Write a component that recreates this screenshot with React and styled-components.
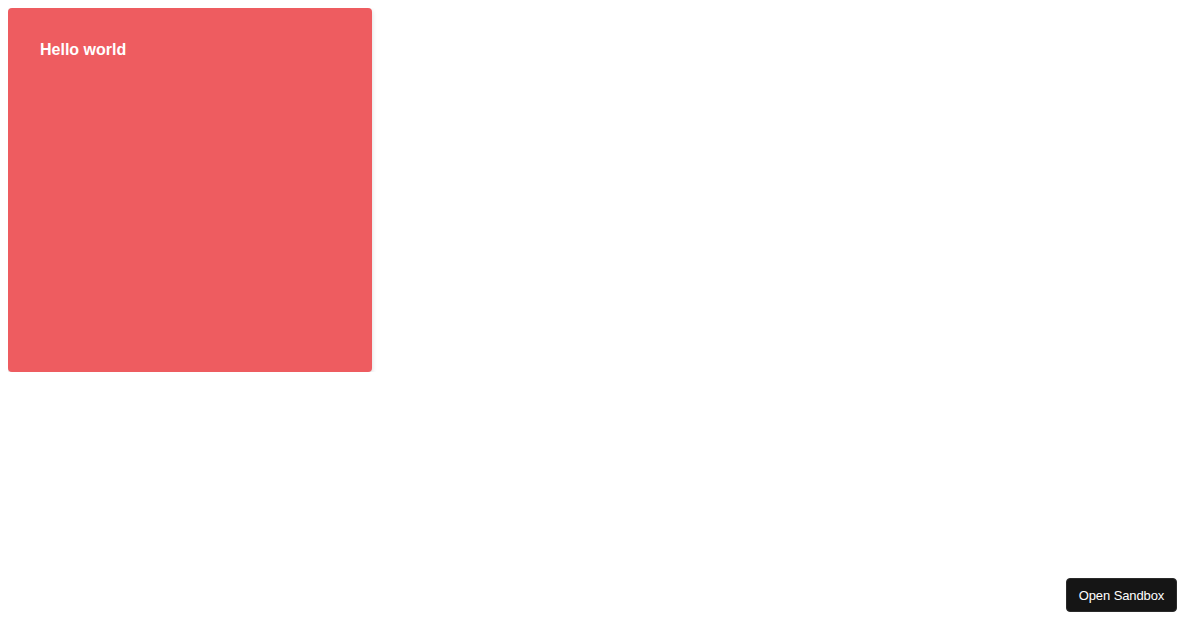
import React from "react";
import styled, { createGlobalStyle } from "styled-components";

const GlobalStyle = createGlobalStyle`
  body {
    margin: 8px;
    background: #ffffff;
    font-family: "Liberation Sans", Arial, sans-serif;
  }
`;

const Card = styled.div`
  width: 364px;
  height: 364px;
  box-sizing: border-box;
  padding: 32px;
  background: #ee5c60;
  border-radius: 4px;
  box-shadow: 0 2px 5px rgba(0, 0, 0, 0.16);
`;

const Title = styled.h1`
  margin: 0;
  color: #ffffff;
  font-size: 16px;
  line-height: 20px;
  font-weight: 700;
`;

const SandboxButton = styled.button`
  position: fixed;
  right: 23px;
  bottom: 18px;
  width: 111px;
  height: 34px;
  border: 1px solid #2a2a2a;
  border-radius: 4px;
  background: #151515;
  color: #ffffff;
  font-family: "Liberation Sans", Arial, sans-serif;
  font-size: 13px;
  letter-spacing: -0.1px;
  cursor: pointer;
`;

const App = () => {
  return (
    <>
      <GlobalStyle />
      <Card>
        <Title>Hello world</Title>
      </Card>
      <SandboxButton>Open Sandbox</SandboxButton>
    </>
  );
};

export default App;
